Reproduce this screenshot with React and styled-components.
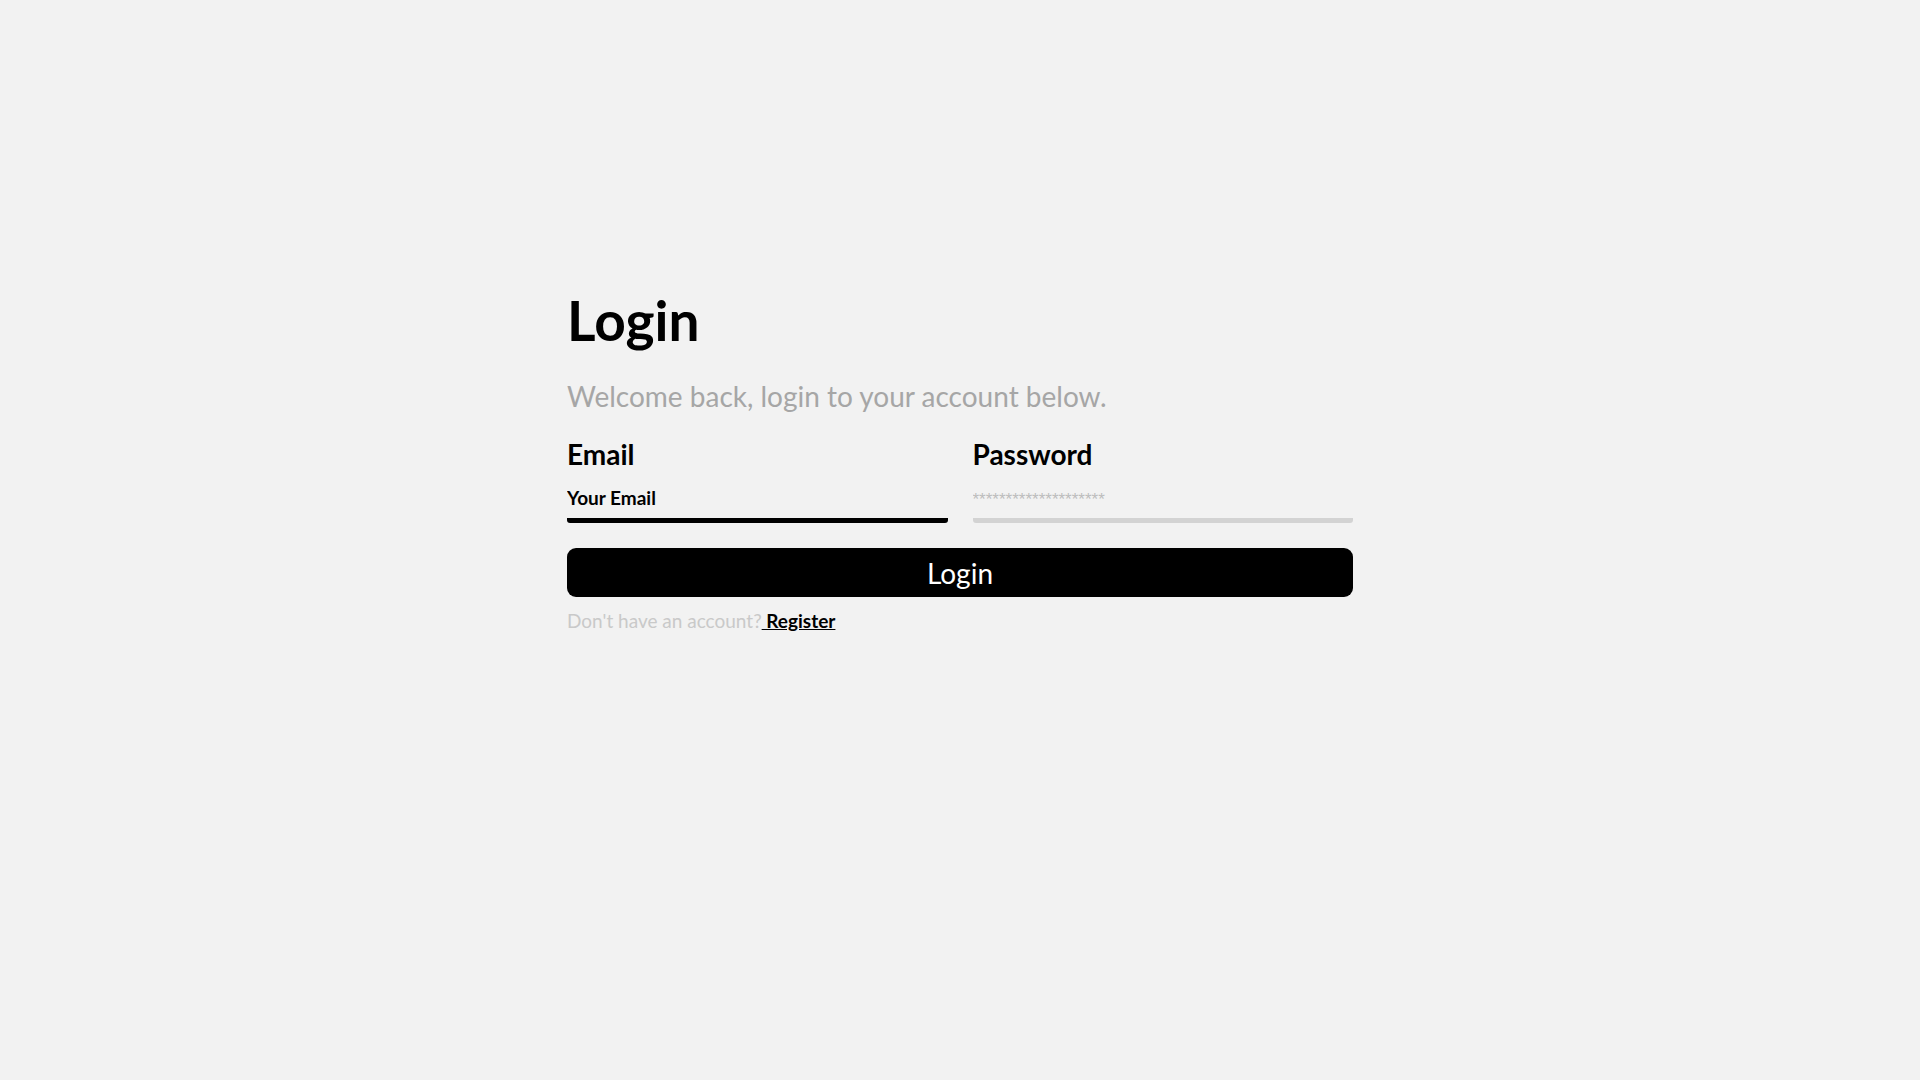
import React, {useState} from 'react';
import styled, {createGlobalStyle} from 'styled-components';

const GlobalStyle = createGlobalStyle`
  html, body {
    margin: 0;
    padding: 0;
    background: #f2f2f2;
  }
  * {
    box-sizing: border-box;
  }
`;

const Page = styled.main`
  min-height: 100vh;
  display: flex;
  justify-content: center;
  padding-top: 288px;
  font-family: Lato, 'Noto Sans', sans-serif;
  color: #000;
`;

const Wrapper = styled.div`
  width: 786px;
  display: flex;
  flex-direction: column;
`;

const Title = styled.h1`
  margin: 0;
  font-size: 55px;
  font-weight: 700;
  line-height: 64px;
`;

const Subtitle = styled.p`
  margin: 28px 0 0;
  font-size: 28px;
  font-weight: 400;
  line-height: 32px;
  color: #a6a6a6;
`;

const Fields = styled.div`
  display: grid;
  grid-template-columns: 1fr 1fr;
  column-gap: 25px;
  margin-top: 26px;
`;

const Field = styled.label`
  display: flex;
  flex-direction: column;
`;

const Label = styled.span`
  font-size: 28px;
  font-weight: 700;
  line-height: 32px;
`;

const Input = styled.input`
  margin-top: 15px;
  padding: 0 0 9px;
  height: 38px;
  border: none;
  border-bottom: 5px solid ${props => (props.$active ? '#000' : '#d3d3d3')};
  border-radius: 0 0 3px 3px;
  background: transparent;
  outline: none;
  font-family: inherit;
  font-size: 19px;
  font-weight: 700;
  line-height: 24px;
  color: #000;

  &::placeholder {
    color: ${props => (props.$active ? '#000' : '#bdbdbd')};
    font-family: ${props => (props.$active ? 'inherit' : "'Liberation Sans', Arial, sans-serif")};
    font-size: ${props => (props.$active ? '19px' : '17px')};
    font-weight: ${props => (props.$active ? 700 : 400)};
  }
`;

const Button = styled.button`
  margin-top: 25px;
  height: 49px;
  border: none;
  border-radius: 9px;
  background: #000;
  color: #fff;
  font-family: inherit;
  font-size: 28px;
  font-weight: 400;
  cursor: pointer;
`;

const Footer = styled.p`
  margin: 12px 0 0;
  font-size: 19px;
  line-height: 24px;
  color: #c9c9c9;
`;

const RegisterLink = styled.a`
  color: #000;
  font-weight: 700;
  text-decoration: underline;
  cursor: pointer;
`;

function App() {
  const [email, setEmail] = useState('');
  const [password, setPassword] = useState('');

  return (
    <>
      <GlobalStyle />
      <Page>
        <Wrapper>
          <Title>Login</Title>
          <Subtitle>Welcome back, login to your account below.</Subtitle>
          <Fields>
            <Field>
              <Label>Email</Label>
              <Input
                $active
                type='email'
                placeholder='Your Email'
                value={email}
                onChange={e => setEmail(e.target.value)}
              />
            </Field>
            <Field>
              <Label>Password</Label>
              <Input
                type='password'
                placeholder='********************'
                value={password}
                onChange={e => setPassword(e.target.value)}
              />
            </Field>
          </Fields>
          <Button type='button'>Login</Button>
          <Footer>
            Don't have an account?<RegisterLink> Register</RegisterLink>
          </Footer>
        </Wrapper>
      </Page>
    </>
  );
}

export default App;
